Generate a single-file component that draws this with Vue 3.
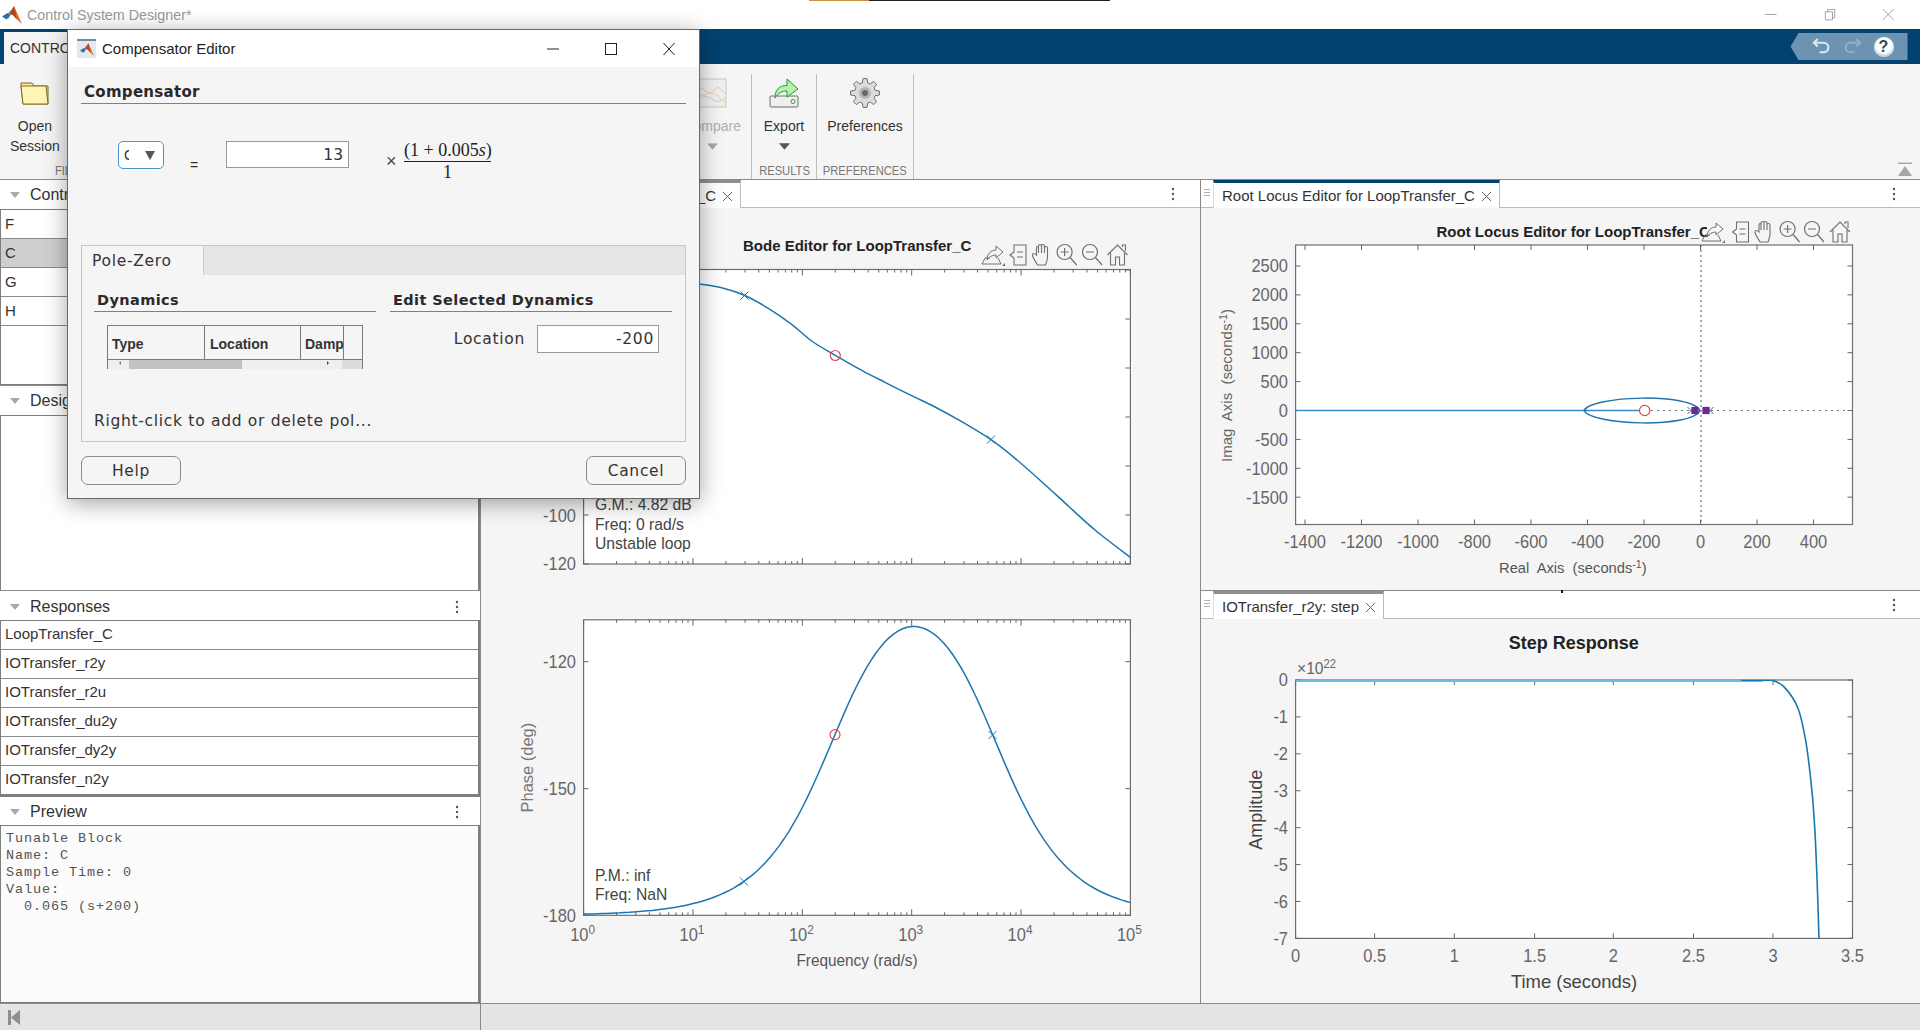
<script setup>
import { h } from 'vue'

const fmt = (n) => Math.round(n * 10) / 10
const T = (x, y, s, o = {}) => ({ x, y, s, size: 17.5, sx: 0.94, fill: '#666', anchor: 'middle', weight: 400, rot: 0, ...o })
const C = (a, b, c) => ({ d: a, stroke: b || '#1a76b0', w: c || 1.5 })
const crossPath = (x, y, r) => `M${x - r} ${y + r}L${x + r} ${y - r}M${x - r} ${y - r}L${x + r} ${y + r}`
const smooth = (pts) => {
  let d = `M${pts[0][0]} ${pts[0][1]}`
  for (let i = 0; i < pts.length - 1; i++) {
    const p0 = pts[i - 1] || pts[i], p1 = pts[i], p2 = pts[i + 1], p3 = pts[i + 2] || p2
    d += `C${fmt(p1[0] + (p2[0] - p0[0]) / 6)} ${fmt(p1[1] + (p2[1] - p0[1]) / 6)} ${fmt(p2[0] - (p3[0] - p1[0]) / 6)} ${fmt(p2[1] - (p3[1] - p1[1]) / 6)} ${fmt(p2[0])} ${fmt(p2[1])}`
  }
  return d
}
const range = (a, n, s) => Array.from({ length: n }, (_, i) => a + s * i)
const xTicks = (xs, t, b, l) => xs.map((x) => `M${x} ${t}v${l}M${x} ${b}v${-l}`).join('')
const yTicks = (ys, lft, r, l) => ys.map((y) => `M${lft} ${y}h${l}M${r} ${y}h${-l}`).join('')

/* ---------- Bode ---------- */
const L = 583.6, R = 1130.4, DEC = (R - L) / 5
const xw = (w) => L + DEC * Math.log10(w)
const decX = range(0, 6, 1).map((i) => L + DEC * i)
const minorX = []
range(0, 5, 1).forEach((d) => range(2, 8, 1).forEach((m) => minorX.push(fmt(L + DEC * (d + Math.log10(m))))))
const phaseAt = (w) => -180 + (Math.atan(w / 200) - Math.atan(w / 5460)) * 180 / Math.PI
const phaseY = (p) => 915.3 - (p + 180) / 30 * 126.8
const phasePts = range(0, 121, 1).map((i) => {
  const w = Math.pow(10, i / 24)
  return [fmt(xw(w)), fmt(phaseY(phaseAt(w)))]
})
const magRaw = [[12, 57], [80, 68], [148, 91], [220, 130], [290, 178], [350, 228], [421, 271], [500, 316], [570, 352], [650, 392], [720, 426], [800, 470], [888, 524], [960, 580], [1040, 650], [1120, 723], [1200, 795], [1306, 877]]
const magPts = magRaw.map(([a, b]) => [695 + a / 3, 265 + b / 3])
const magY = range(0, 7, 1).map((i) => 564 - 49 * i)
const bode = {
  vx: 480, vy: 208, w: 720, h: 795,
  axes: [[L, 269.5, R - L, 294.5], [L, 619.8, R - L, 295.5]],
  ticks:
    xTicks(decX, 269.5, 564, 6) + xTicks(minorX, 269.5, 564, 3) +
    xTicks(decX, 619.8, 915.3, 6) + xTicks(minorX, 619.8, 915.3, 3) +
    yTicks(magY, L, R, 5) + yTicks([661.7, 788.7, 915.3], L, R, 5),
  curves: [
    C(smooth(magPts)), C(`M${phasePts.map((p) => p.join(' ')).join('L')}`),
    C(crossPath(744.5, 295.5, 4), '#1a76b0', 1), C(crossPath(991, 439.5, 4), '#1a76b0', 1),
    C(crossPath(744, 881.6, 4), '#1a76b0', 1), C(crossPath(992.5, 735, 4), '#1a76b0', 1),
  ],
  circles: [[835.3, 355.5, 5], [835, 734.6, 5]],
  texts: [
    T(743, 251, 'Bode Editor for LoopTransfer_C', { size: 15, sx: 1, weight: 700, fill: '#222', anchor: 'start' }),
    T(576, 521.5, '-100', { anchor: 'end' }), T(576, 570, '-120', { anchor: 'end' }),
    T(576, 668, '-120', { anchor: 'end' }), T(576, 795, '-150', { anchor: 'end' }), T(576, 922, '-180', { anchor: 'end' }),
    T(595, 510, 'G.M.: 4.82 dB', { size: 16, sx: 0.98, fill: '#444', anchor: 'start' }),
    T(595, 529.5, 'Freq: 0 rad/s', { size: 16, sx: 0.98, fill: '#444', anchor: 'start' }),
    T(595, 549, 'Unstable loop', { size: 16, sx: 0.98, fill: '#444', anchor: 'start' }),
    T(595, 881, 'P.M.: inf', { size: 16, sx: 0.98, fill: '#444', anchor: 'start' }),
    T(595, 900, 'Freq: NaN', { size: 16, sx: 0.98, fill: '#444', anchor: 'start' }),
    T(533, 767.6, 'Phase (deg)', { size: 16, sx: 1.03, rot: -90, fill: '#777' }),
    T(857, 965.5, 'Frequency (rad/s)', { size: 16, sx: 0.96, fill: '#555' }),
    ...decX.map((x, i) => T(x - 1, 941, '10', { sup: String(i), supDy: -7 })),
  ],
  uses: [['edit', 993], ['list', 1018], ['hand', 1042.5], ['zin', 1066.6], ['zout', 1092], ['home', 1117.5]].map(([id, x]) => ({ id, x, y: 255 })),
  covers: [],
}

/* ---------- Root locus ---------- */
const AL = 1294.6, AR = 1851.5
const rlX = range(1304, 10, 56.5)
const rlY = range(266, 9, 28.9)
const rl = {
  vx: 1200, vy: 208, w: 720, h: 382,
  axes: [[AL, 245, AR - AL, 279.5]],
  ticks: xTicks(rlX, 245, 524.5, 5) + yTicks(rlY, AL, AR, 5),
  curves: [
    { d: 'M1700 245V524.5', stroke: '#555', w: 1, dash: '2 3' },
    { d: 'M1650 410.5H1851.5', stroke: '#777', w: 1, dash: '2 4' },
    C('M1294.6 410.5H1638', '#3b8cc4', 1.5),
    C('M1583 410.5C1590 396 1690 392 1699 410.5C1690 429 1590 425 1583 410.5Z', '#1f74ad', 1.5),
    C(crossPath(1690, 410.5, 3.5), '#2b6fb0', 1), C(crossPath(1709, 410.5, 3.5), '#2b6fb0', 1),
  ],
  circles: [[1643.7, 410.5, 5.2]],
  squares: [[1694, 410.5], [1705, 410.5]],
  texts: [
    T(1435.5, 237, 'Root Locus Editor for LoopTransfer_C', { size: 15, sx: 1, weight: 700, fill: '#222', anchor: 'start' }),
    ...['2500', '2000', '1500', '1000', '500', '0', '-500', '-1000', '-1500'].map((s, i) => T(1287, rlY[i] + 6.3, s, { anchor: 'end' })),
    ...['-1400', '-1200', '-1000', '-800', '-600', '-400', '-200', '0', '200', '400'].map((s, i) => T(rlX[i], 547.5, s)),
    T(1498, 573, 'Real\u00a0 Axis\u00a0 (seconds', { size: 15.5, sx: 0.95, fill: '#555', anchor: 'start', sup: '-1', supDy: -5, tail: ')' }),
    T(1231, 462, 'Imag\u00a0 Axis\u00a0 (seconds', { size: 15, sx: 1, fill: '#666', anchor: 'start', rot: -90, sup: '-1', supDy: -5, tail: ')' }),
  ],
  uses: [['edit', 1712], ['list', 1739.5], ['hand', 1764], ['zin', 1788.6], ['zout', 1813], ['home', 1839]].map(([id, x]) => ({ id, x, y: 232 })),
  covers: [[1706, 222, 24, 20]],
}

/* ---------- Step ---------- */
const stX = [1294.6, 1373.6, 1453.3, 1533.6, 1612.3, 1692.5, 1772, 1851.5]
const stY = range(680, 8, 36.91)
const stepZoom = [[1245, 571], [1270, 590], [1300, 650], [1318, 750], [1330, 880], [1337, 1000], [1342, 1150], [1346, 1307]]
const stepPts = stepZoom.map(([a, b]) => [fmt(1200 + a / 2.178), fmt(480 + b / 2.851)])
const step = {
  vx: 1200, vy: 619, w: 720, h: 384,
  axes: [[AL, 680, AR - AL, 258.4]],
  ticks: xTicks(stX, 680, 938.4, 5) + yTicks(stY, AL, AR, 5),
  curves: [C(`M${AL} 681H1762`, '#72b8e4', 2), C(`M1740 680.4H1771.6`, '#1a76b0', 1.2), C(smooth(stepPts), '#1a76b0', 1.6)],
  circles: [],
  texts: [
    T(1572.8, 648.5, 'Step Response', { size: 18, sx: 1, weight: 700, fill: '#222' }),
    T(1296, 674, '×10', { size: 16.5, sx: 0.95, anchor: 'start', sup: '22', supDy: -6 }),
    ...['0', '-1', '-2', '-3', '-4', '-5', '-6', '-7'].map((s, i) => T(1287, stY[i] + 6.3, s, { anchor: 'end' })),
    ...['0', '0.5', '1', '1.5', '2', '2.5', '3', '3.5'].map((s, i) => T(stX[i], 961.5, s)),
    T(1573, 988, 'Time (seconds)', { size: 19, sx: 0.97, fill: '#444' }),
    T(1261, 809.7, 'Amplitude', { size: 18, sx: 1, rot: -90, fill: '#444' }),
  ],
  uses: [],
  covers: [],
}

const Plot = ({ data: p }) =>
  h('svg', { class: 'plot', width: p.w, height: p.h, viewBox: `${p.vx} ${p.vy} ${p.w} ${p.h}` }, [
    ...p.axes.map((a) => h('rect', { x: a[0], y: a[1], width: a[2], height: a[3], fill: '#fff', stroke: '#6e6e6e', 'stroke-width': 1.2 })),
    h('path', { d: p.ticks, stroke: '#666', fill: 'none', 'stroke-width': 1 }),
    ...p.curves.map((c) => h('path', { d: c.d, stroke: c.stroke, 'stroke-width': c.w, 'stroke-dasharray': c.dash, fill: 'none' })),
    ...(p.squares || []).map((s) => h('rect', { x: s[0] - 3.6, y: s[1] - 3.6, width: 7.2, height: 7.2, fill: '#6a2a8e' })),
    ...p.circles.map((c) => h('circle', { cx: c[0], cy: c[1], r: c[2], fill: 'none', stroke: '#e5484d', 'stroke-width': 1.2 })),
    ...p.texts.map((t) =>
      h('text', {
        transform: `translate(${t.x} ${t.y}) rotate(${t.rot}) scale(${t.sx} 1)`,
        'font-size': t.size, 'font-weight': t.weight, fill: t.fill, 'text-anchor': t.anchor,
      }, [
        t.s,
        t.sup ? h('tspan', { dy: t.supDy, 'font-size': t.size * 0.72 }, t.sup) : null,
        t.tail ? h('tspan', { dy: -t.supDy }, t.tail) : null,
      ])),
    ...p.covers.map((c) => h('rect', { x: c[0], y: c[1], width: c[2], height: c[3], fill: '#f5f5f5' })),
    ...p.uses.map((u) => h('use', { href: `#ti-${u.id}`, x: u.x - 12, y: u.y - 12, width: 24, height: 24 })),
  ])

const gearPath = (() => {
  const n = 8, pts = []
  for (let i = 0; i < n; i++) {
    const a = (i / n) * Math.PI * 2
    ;[[-0.26, 10.5], [-0.14, 14.5], [0.14, 14.5], [0.26, 10.5]].forEach(([o, r]) => {
      pts.push(`${fmt(15 + r * Math.cos(a + o))} ${fmt(15 + r * Math.sin(a + o))}`)
    })
  }
  return `M${pts.join('L')}Z`
})()

const controlRows = ['F', 'C', 'G', 'H']
const responseRows = ['LoopTransfer_C', 'IOTransfer_r2y', 'IOTransfer_r2u', 'IOTransfer_du2y', 'IOTransfer_dy2y', 'IOTransfer_n2y']
const previewText = `Tunable Block
Name: C
Sample Time: 0
Value:
  0.065 (s+200)`
</script>

<template>
  <div class="app">
    <svg class="defs" width="0" height="0" aria-hidden="true">
      <defs>
        <symbol id="logo" viewBox="0 0 20 18">
          <polygon points="0,10.5 5.5,7 8.5,9 4.5,13.5" fill="#2d6fa8" />
          <polygon points="4.5,13.5 8.5,9 6,7.5 11,1.5 7,12 " fill="#3c8fc7" />
          <polygon points="12,0 20,18 15,13.5 11,9 7.5,8.5" fill="#e0702a" />
          <polygon points="12,0 14,9 15,13.5 11,9 8,8" fill="#b8401c" />
        </symbol>
        <symbol id="kebab" viewBox="0 0 4 14">
          <circle cx="2" cy="2" r="1.2" fill="#555" />
          <circle cx="2" cy="7" r="1.2" fill="#555" />
          <circle cx="2" cy="12" r="1.2" fill="#555" />
        </symbol>
        <symbol id="tri" viewBox="0 0 12 7">
          <polygon points="0,0 12,0 6,7" fill="#a8a8a8" />
        </symbol>
        <symbol id="ti-edit" viewBox="-12 -12 24 24">
          <g fill="none" stroke="#707070" stroke-width="1">
            <path d="M-11 9L-8 3H-3M-11 9H8L5 3" />
            <path d="M-6 5C-6 -1 -2 -5 3 -5V-9L10 -3L3 3V0C-1 0 -4 2 -6 5Z" />
          </g>
          <path d="M9 11H12V8Z" fill="#707070" />
        </symbol>
        <symbol id="ti-list" viewBox="-12 -12 24 24">
          <path d="M-4 -10H8V10H-4V3L-8 0L-4 -3ZM-1 -3H5M-1 2H5" fill="none" stroke="#707070" stroke-width="1.1" />
        </symbol>
        <symbol id="ti-hand" viewBox="-12 -12 24 24">
          <path d="M-5 10C-7 6 -10 3 -10 0C-10 -2 -8 -2 -6 0L-6 -7C-6 -9 -4 -9 -4 -7L-4 -2L-4 -9C-4 -11 -1 -11 -1 -9L-1 -2L-1 -9C-1 -11 2 -11 2 -9L2 -2L2 -7C2 -9 5 -9 5 -7L5 2C5 5 4 7 3 10Z" fill="none" stroke="#707070" stroke-width="1.1" />
        </symbol>
        <symbol id="ti-zin" viewBox="-12 -12 24 24">
          <g fill="none" stroke="#707070" stroke-width="1.2">
            <circle cx="-2" cy="-3" r="7.5" />
            <path d="M3.5 2.5L10 10M-6 -3H2M-2 -7V1" />
          </g>
        </symbol>
        <symbol id="ti-zout" viewBox="-12 -12 24 24">
          <g fill="none" stroke="#707070" stroke-width="1.2">
            <circle cx="-2" cy="-3" r="7.5" />
            <path d="M3.5 2.5L10 10M-6 -3H2" />
          </g>
        </symbol>
        <symbol id="ti-home" viewBox="-12 -12 24 24">
          <path d="M-10 0L0 -10L10 0M-7 -2V10H-2V2H2V10H7V-2M5 -8V-10H8V-4" fill="none" stroke="#707070" stroke-width="1.1" />
        </symbol>
      </defs>
    </svg>

    <header class="titlebar">
      <svg class="app-logo"><use href="#logo" /></svg>
      <span class="app-title">Control System Designer*</span>
      <div class="top-line"><i class="top-orange"></i><i class="top-black"></i></div>
      <div class="win-controls">
        <svg class="win-btn" viewBox="0 0 14 14"><path d="M0 7H13" stroke="#999" fill="none" /></svg>
        <svg class="win-btn" viewBox="0 0 14 14"><path d="M1.5 4H9.5V13H1.5ZM4 4V1.5H12V10.5H9.5" stroke="#999" fill="none" /></svg>
        <svg class="win-btn" viewBox="0 0 14 14"><path d="M1 1L13 13M13 1L1 13" stroke="#999" fill="none" /></svg>
      </div>
    </header>

    <div class="bluebar">
      <div class="main-tab">CONTROL SYSTEM</div>
      <div class="quick">
        <svg class="q-icon" viewBox="0 0 20 20"><path d="M6 2L2 6L6 10M2 6H12C19 6 19 16 12 16H8" stroke="#dbe8f2" stroke-width="2.2" fill="none" /></svg>
        <svg class="q-icon" viewBox="0 0 20 20"><path d="M14 2L18 6L14 10M18 6H8C1 6 1 16 8 16H12" stroke="#8fb0c9" stroke-width="2.2" fill="none" /></svg>
        <span class="q-help">?</span>
      </div>
    </div>

    <div class="toolstrip">
      <section class="tsec sec-file">
        <div class="tool">
          <svg class="ticon" viewBox="0 0 32 30">
            <path d="M2 8V5H13L15 8H29V26H4Z" fill="#f5e9a0" stroke="#7d6c20" />
            <path d="M2 8H27L29 26H4Z" fill="#fdf4b8" stroke="#7d6c20" />
          </svg>
          <span class="tlabel">Open</span>
          <span class="tlabel">Session</span>
        </div>
        <span class="sec-label label-file">FILE</span>
      </section>
      <section class="tsec sec-mid">
        <div class="tool tool-off">
          <svg class="ticon" viewBox="0 0 32 30">
            <rect x="2" y="1" width="28" height="28" fill="#f0f0f0" stroke="#c8c8c8" />
            <path d="M2 8L14 16L22 9L30 16" stroke="#efc4b4" fill="none" />
            <path d="M2 16L14 20L22 24L30 20" stroke="#b9d3e6" fill="none" />
            <path d="M2 20L14 14L22 18L30 26" stroke="#e9dca0" fill="none" />
          </svg>
          <span class="tlabel">Compare</span>
          <svg class="tarrow" viewBox="0 0 12 7"><use href="#tri" /></svg>
        </div>
        <span class="sec-label">&nbsp;</span>
      </section>
      <section class="tsec sec-res">
        <div class="tool">
          <svg class="ticon" viewBox="0 0 32 30">
            <rect x="2" y="18" width="28" height="11" rx="1" fill="#efefef" stroke="#707070" />
            <circle cx="25" cy="23.5" r="2" fill="#fff" stroke="#1c9a35" />
            <path d="M7 20C7 12 11 7.5 19 7.5V1L30 11L19 19V13C14 13 10 15 7 20Z" fill="#b8f0ac" stroke="#169a2f" />
          </svg>
          <span class="tlabel">Export</span>
          <svg class="tarrow dark" viewBox="0 0 12 7"><polygon points="0,0 12,0 6,7" fill="#555" /></svg>
        </div>
        <span class="sec-label">RESULTS</span>
      </section>
      <section class="tsec sec-pref">
        <div class="tool">
          <svg class="ticon" viewBox="0 0 30 30">
            <path :d="gearPath" fill="#dcdcdc" stroke="#6f6f6f" />
            <circle cx="15" cy="15" r="6" fill="#b4b4b4" />
            <circle cx="15" cy="15" r="3" fill="#666" />
          </svg>
          <span class="tlabel">Preferences</span>
        </div>
        <span class="sec-label">PREFERENCES</span>
      </section>
      <svg class="collapse" viewBox="0 0 14 14">
        <path d="M0 .5H14V2H0Z" fill="#a6a6a6" />
        <polygon points="7,4 14,14 0,14" fill="#a6a6a6" />
      </svg>
    </div>

    <main class="main">
      <aside class="left">
        <div class="phead">
          <svg class="ptri"><use href="#tri" /></svg><span>Controllers and Fixed Blocks</span>
          <svg class="kebab"><use href="#kebab" /></svg>
        </div>
        <ul class="rows rows-control">
          <li v-for="r in controlRows" :key="r" class="row" :class="{ sel: r === 'C' }">{{ r }}</li>
        </ul>
        <div class="phead">
          <svg class="ptri"><use href="#tri" /></svg><span>Design History</span>
          <svg class="kebab"><use href="#kebab" /></svg>
        </div>
        <div class="design-box"></div>
        <div class="phead head-resp">
          <svg class="ptri"><use href="#tri" /></svg><span>Responses</span>
          <svg class="kebab"><use href="#kebab" /></svg>
        </div>
        <ul class="rows rows-resp">
          <li v-for="r in responseRows" :key="r" class="row">{{ r }}</li>
        </ul>
        <div class="phead head-prev">
          <svg class="ptri"><use href="#tri" /></svg><span>Preview</span>
          <svg class="kebab"><use href="#kebab" /></svg>
        </div>
        <pre class="preview">{{ previewText }}</pre>
      </aside>

      <section class="center">
        <div class="strip">
          <div class="doc-tab doc-tab-center">
            <span class="doc-text">Bode Editor for LoopTransfer_C</span>
            <svg class="x-ico" viewBox="0 0 12 12"><path d="M1 1L11 11M11 1L1 11" stroke="#555" fill="none" /></svg>
          </div>
          <svg class="kebab kebab-c"><use href="#kebab" /></svg>
        </div>
        <Plot :data="bode" />
      </section>

      <section class="right">
        <div class="strip">
          <span class="grip"></span>
          <div class="doc-tab doc-active">
            <span class="doc-text">Root Locus Editor for LoopTransfer_C</span>
            <svg class="x-ico" viewBox="0 0 12 12"><path d="M1 1L11 11M11 1L1 11" stroke="#555" fill="none" /></svg>
          </div>
          <svg class="kebab kebab-r"><use href="#kebab" /></svg>
        </div>
        <Plot :data="rl" />
        <div class="strip strip-2">
          <span class="grip"></span>
          <div class="doc-tab">
            <span class="doc-text">IOTransfer_r2y: step</span>
            <svg class="x-ico" viewBox="0 0 12 12"><path d="M1 1L11 11M11 1L1 11" stroke="#555" fill="none" /></svg>
          </div>
          <svg class="kebab kebab-r"><use href="#kebab" /></svg>
          <i class="split-mark"></i>
        </div>
        <Plot :data="step" />
      </section>
    </main>

    <footer class="status">
      <div class="status-left">
        <svg class="status-ico" viewBox="0 0 12 15">
          <rect x="0" y="0" width="3" height="15" fill="#8e8e8e" />
          <polygon points="12,0 12,15 3,7.5" fill="#8e8e8e" />
        </svg>
      </div>
    </footer>

    <div class="dialog">
      <div class="dlg-title">
        <span class="dlg-icon"><svg class="dlg-logo"><use href="#logo" /></svg></span>
        <span class="dlg-name">Compensator Editor</span>
        <div class="dlg-controls">
          <svg class="dlg-btn" viewBox="0 0 14 14"><path d="M1 7H13" stroke="#222" fill="none" /></svg>
          <svg class="dlg-btn" viewBox="0 0 14 14"><rect x="1.5" y="1.5" width="11" height="11" stroke="#222" fill="none" /></svg>
          <svg class="dlg-btn" viewBox="0 0 14 14"><path d="M1.5 1L12.5 13M12.5 1L1.5 13" stroke="#222" fill="none" /></svg>
        </div>
      </div>
      <div class="dlg-body">
        <div class="section-head head-comp">Compensator</div>
        <div class="formula">
          <div class="combo"><span class="combo-text">C</span><i class="combo-arrow"></i></div>
          <span class="eq">=</span>
          <div class="field field-gain">13</div>
          <span class="times">×</span>
          <div class="frac">
            <span class="num">(1 + 0.005<em>s</em>)</span>
            <span class="den">1</span>
          </div>
        </div>
        <div class="panel">
          <div class="tabhead"><div class="tabhead-tab">Pole-Zero</div></div>
          <div class="panel-body">
            <div class="cols">
              <div class="col">
                <div class="section-head head-sub">Dynamics</div>
                <div class="table">
                  <div class="thead">
                    <span class="th th-1">Type</span>
                    <span class="th th-2">Location</span>
                    <span class="th th-3">Damp</span>
                    <span class="th th-4"></span>
                  </div>
                  <div class="tscroll">
                    <i class="t-arrow t-arrow-l"></i>
                    <i class="t-thumb"></i>
                    <i class="t-arrow t-arrow-r"></i>
                    <i class="t-corner"></i>
                  </div>
                </div>
              </div>
              <div class="col">
                <div class="section-head head-sub">Edit Selected Dynamics</div>
                <div class="loc-row">
                  <span class="loc-label">Location</span>
                  <div class="field field-loc">-200</div>
                </div>
              </div>
            </div>
            <div class="note">Right-click to add or delete pol...</div>
          </div>
        </div>
        <div class="btn-row">
          <button class="btn">Help</button>
          <button class="btn">Cancel</button>
        </div>
      </div>
    </div>
  </div>
</template>

<style>
html, body { margin: 0; padding: 0; background: #f5f5f5; overflow: hidden; }
</style>

<style scoped>
.app {
  position: relative;
  width: 1920px;
  height: 1030px;
  overflow: hidden;
  background: #f5f5f5;
  font-family: "Liberation Sans", Arial, sans-serif;
  color: #333;
  display: flex;
  flex-direction: column;
}
.defs { position: absolute; }

.titlebar {
  position: relative;
  height: 29px;
  flex: none;
  background: #fff;
  display: flex;
  align-items: center;
  padding-left: 2px;
}
.app-logo { width: 20px; height: 18px; }
.app-title { margin-left: 5px; font-size: 14.3px; color: #999; }
.top-line { position: absolute; left: 809px; top: 0; display: flex; height: 1px; }
.top-orange { width: 60px; background: #c8963f; }
.top-black { width: 241px; background: #222; }
.win-controls { margin-left: auto; display: flex; padding-right: 2.5px; }
.win-btn { width: 12.5px; height: 13px; margin: 0 23px; }

.bluebar {
  height: 35px;
  flex: none;
  background: #03426f;
  display: flex;
  align-items: flex-end;
  padding-left: 4px;
}
.main-tab {
  width: 140px;
  height: 32px;
  background: #f5f5f5;
  font-size: 14px;
  line-height: 32px;
  padding-left: 6px;
  box-sizing: border-box;
  white-space: nowrap;
  overflow: hidden;
}
.quick {
  margin-left: auto;
  margin-right: 12.5px;
  align-self: flex-start;
  margin-top: 4px;
  width: 117px;
  height: 27px;
  background: #6c93b2;
  clip-path: polygon(0 50%, 8px 0, 100% 0, 100% 100%, 8px 100%);
  display: flex;
  align-items: center;
  padding-left: 21px;
  box-sizing: border-box;
  gap: 12px;
}
.q-icon { width: 19px; height: 19px; }
.q-help {
  width: 20px;
  height: 20px;
  border-radius: 50%;
  background: #fff;
  color: #2d4a63;
  font-weight: 700;
  font-size: 16px;
  line-height: 20px;
  text-align: center;
  box-shadow: inset 0 -2px 3px #b8c6d2;
}

.toolstrip {
  height: 115px;
  flex: none;
  box-sizing: border-box;
  padding-top: 10px;
  display: flex;
  background: #f5f5f5;
}
.tsec {
  height: 105px;
  box-sizing: border-box;
  border-right: 1px solid #bdbdbd;
  display: flex;
  flex-direction: column;
  align-items: center;
  justify-content: space-between;
}
.sec-file { width: 138px; border-right: 0; align-items: flex-start; padding-left: 10px; }
.label-file { margin-left: 43px; }
.sec-mid { width: 614px; align-items: flex-end; padding-right: 10px; }
.sec-res { width: 65px; }
.sec-pref { width: 97px; }
.tool { display: flex; flex-direction: column; align-items: center; padding-top: 4px; }
.tool-off { color: #b0b0b0; }
.ticon { width: 32px; height: 30px; flex: none; margin-bottom: 8px; }
.tlabel { font-size: 14px; line-height: 20px; white-space: nowrap; }
.tarrow { width: 11px; height: 7px; margin-top: 7px; }
.sec-label {
  font-size: 13px;
  line-height: 17px;
  color: #777;
  transform: scaleX(0.86);
  white-space: nowrap;
}
.collapse { width: 14px; height: 14px; margin-left: auto; margin-right: 8px; align-self: flex-end; margin-bottom: 3px; }

.main { flex: 1; display: flex; min-height: 0; }
.left {
  width: 481px;
  flex: none;
  box-sizing: border-box;
  border-right: 1px solid #8a8a8a;
  background: #fff;
  display: flex;
  flex-direction: column;
}
.phead {
  height: 30px;
  flex: none;
  box-sizing: border-box;
  border-top: 1px solid #8a8a8a;
  display: flex;
  align-items: center;
  font-size: 16px;
  color: #333;
  background: #fff;
  padding-left: 10px;
}
.head-resp, .head-prev { padding-top: 2px; }
.ptri { width: 10px; height: 6px; margin-right: 10px; }
.kebab { width: 4px; height: 14px; }
.phead .kebab { margin-left: auto; margin-right: 21px; }
.rows { list-style: none; margin: 0; padding: 0; border: 1px solid #7e7e7e; border-width: 1px 2px 0 1px; }
.rows-control { height: 176px; flex: none; box-sizing: border-box; border-bottom: 1px solid #7e7e7e; }
.rows-resp { height: 177px; flex: none; box-sizing: border-box; border-bottom: 3px solid #7e7e7e; }
.row {
  height: 29px;
  box-sizing: border-box;
  border-bottom: 1px solid #8a8a8a;
  font-size: 15px;
  line-height: 25px;
  padding-left: 4px;
  color: #333;
}
.rows-control .row { line-height: 27px; }
.rows-resp .row:last-child { border-bottom: 0; }
.sel { background: #cfcfcf; }
.design-box {
  height: 175px;
  flex: none;
  box-sizing: border-box;
  border: 1px solid #7e7e7e;
  border-width: 1px 2px 0 1px;
}
.head-prev { height: 28px; border-top: 0; }
.preview {
  margin: 0;
  flex: 1;
  box-sizing: border-box;
  background: #fbfbfb;
  border: 1px solid #7e7e7e;
  border-width: 1px 2px 1px 1px;
  padding: 4px 5px;
  font-family: "Liberation Mono", monospace;
  font-size: 13.5px;
  letter-spacing: 0.9px;
  line-height: 17px;
  color: #555;
}

.center, .right { width: 720px; flex: none; background: #f5f5f5; }
.center { width: 719px; border-right: 1px solid #8a8a8a; }
.right { width: 720px; }
.plot { display: block; font-family: "Liberation Sans", Arial, sans-serif; }
.center :deep(.plot) { margin-left: -1px; }
.strip {
  position: relative;
  height: 29px;
  box-sizing: border-box;
  background: #fff;
  border-top: 1px solid #8a8a8a;
  border-bottom: 1px solid #bbb;
  display: flex;
  align-items: center;
}
.strip-2 { margin-top: 0; border-top: 1px solid #8a8a8a; }
.grip {
  width: 12px;
  height: 9px;
  flex: none;
  margin-top: -1px;
  background: repeating-linear-gradient(#b0b0b0 0 1px, transparent 1px 3px) no-repeat 3px 0 / 6px 100%;
}
.doc-tab {
  height: 28px;
  margin-bottom: -1px;
  box-sizing: border-box;
  background: #fff;
  border-top: 3px solid #8f8f8f;
  border-left: 1px solid #ddd;
  border-right: 1px solid #bbb;
  display: flex;
  align-items: center;
  padding: 1px 7px 0 8px;
  font-size: 15px;
  white-space: nowrap;
  color: #333;
}
.doc-tab-center { width: 260px; justify-content: flex-end; }
.doc-active { border-top-color: #03426f; }
.doc-text { line-height: 20px; }
.x-ico { width: 11px; height: 11px; margin-left: 6px; flex: none; }
.kebab-c { margin-left: auto; margin-right: 25px; }
.kebab-r { margin-left: auto; margin-right: 25px; }
.split-mark { position: absolute; left: 360px; top: -1px; width: 2px; height: 3px; background: #111; }

.status {
  height: 27px;
  flex: none;
  box-sizing: border-box;
  background: #e4e4e4;
  border-top: 1px solid #8a8a8a;
  display: flex;
}
.status-left { width: 481px; box-sizing: border-box; border-right: 1px solid #8a8a8a; padding: 6px 0 0 8px; }
.status-ico { display: block; width: 12px; height: 15px; }

.dialog {
  position: absolute;
  left: 68px;
  top: 30px;
  width: 631px;
  height: 468px;
  box-sizing: border-box;
  background: #f5f5f5;
  box-shadow: 0 0 0 1px #6a6a6a, 0 4px 22px rgba(0, 0, 0, 0.4);
  font-family: "DejaVu Sans", sans-serif;
  color: #333;
  z-index: 5;
}
.dlg-title {
  height: 37px;
  background: #fff;
  display: flex;
  align-items: center;
  padding-left: 9px;
  font-family: "Liberation Sans", Arial, sans-serif;
}
.dlg-icon {
  width: 19px;
  height: 19px;
  background: #e4e8ec;
  border-top: 2px solid #6a8aa6;
  box-sizing: border-box;
  display: flex;
  align-items: center;
  justify-content: center;
}
.dlg-logo { width: 14px; height: 13px; }
.dlg-name { margin-left: 6px; font-size: 15px; color: #222; }
.dlg-controls { margin-left: auto; display: flex; margin-right: 1px; }
.dlg-btn { width: 14px; height: 14px; margin: 0 22px; }
.dlg-body { padding: 0 13px; }
.section-head {
  height: 24px;
  line-height: 24px;
  box-sizing: border-box;
  border-bottom: 1px solid #808080;
  font-size: 14.5px;
  font-weight: 700;
  letter-spacing: 0.4px;
  padding-left: 3px;
  color: #2a2a2a;
  white-space: nowrap;
}
.head-comp { margin-top: 13px; font-size: 15px; letter-spacing: 0.3px; }
.head-sub { height: 23px; line-height: 22px; }
.formula { display: flex; align-items: flex-start; margin-top: 37px; padding-left: 37px; height: 28px; }
.combo {
  width: 46px;
  height: 28px;
  box-sizing: border-box;
  border: 1px solid #4f93c4;
  border-radius: 5px;
  background: #fff;
  display: flex;
  align-items: center;
  padding-left: 5px;
}
.combo-text { width: 5px; overflow: hidden; font-size: 14px; font-family: "Liberation Sans", sans-serif; }
.combo-arrow {
  margin-left: 16px;
  width: 0;
  height: 0;
  border: 5px solid transparent;
  border-top: 9px solid #555;
  border-bottom: 0;
}
.eq { margin-left: 26px; margin-top: 16px; font-size: 14px; width: 10px; font-family: "Liberation Sans", sans-serif; }
.field {
  box-sizing: border-box;
  background: #fff;
  border: 1px solid #9a9a9a;
  text-align: right;
  padding-right: 5px;
  font-size: 15.5px;
}
.field-gain { margin-left: 26px; width: 123px; height: 27px; line-height: 27px; }
.times { margin-left: 37px; margin-top: 10px; font-size: 18px; width: 14px; font-family: "Liberation Sans", sans-serif; color: #444; }
.frac {
  margin-left: 4px;
  display: flex;
  flex-direction: column;
  align-items: center;
  width: 87px;
  font-family: "Liberation Serif", serif;
  font-size: 18px;
  color: #222;
  white-space: nowrap;
}
.num { border-bottom: 1px solid #222; width: 100%; text-align: center; line-height: 21px; margin-top: -1px; }
.den { line-height: 21px; }
.panel {
  margin-top: 76px;
  width: 605px;
  height: 197px;
  box-sizing: border-box;
  border: 1px solid #c6c6c6;
}
.tabhead { height: 29px; background: #e5e5e5; display: flex; }
.tabhead-tab {
  width: 122px;
  box-sizing: border-box;
  background: #f5f5f5;
  border-right: 1px solid #cfcfcf;
  padding-left: 10px;
  font-size: 15.5px;
  letter-spacing: 0.7px;
  line-height: 31px;
  color: #333;
}
.panel-body { padding: 0 12px; }
.cols { display: flex; gap: 14px; height: 94px; }
.col { width: 282px; padding-top: 14px; box-sizing: border-box; }
.table {
  margin: 13px 0 0 13px;
  width: 256px;
  height: 44px;
  box-sizing: border-box;
  border: 1px solid #7a7a7a;
  font-family: "Liberation Sans", sans-serif;
}
.thead { display: flex; height: 33px; border-bottom: 1px solid #7a7a7a; }
.th {
  box-sizing: border-box;
  border-right: 1px solid #7a7a7a;
  font-size: 14px;
  font-weight: 700;
  line-height: 36px;
  overflow: hidden;
  color: #333;
  white-space: nowrap;
}
.th-1 { width: 97px; padding-left: 4px; }
.th-2 { width: 96px; padding-left: 5px; }
.th-3 { width: 43px; padding-left: 4px; }
.th-4 { flex: 1; border-right: 0; }
.tscroll { position: relative; height: 9px; background: #efefef; }
.t-thumb { position: absolute; left: 21px; top: 0; width: 113px; height: 100%; background: #c2c2c2; }
.t-corner { position: absolute; right: 0; top: 0; width: 20px; height: 100%; background: #dcdcdc; }
.t-arrow { position: absolute; top: 1px; width: 0; height: 0; border: 2px solid transparent; }
.t-arrow-l { left: 9px; border-right-color: #777; }
.t-arrow-r { left: 219px; border-left-color: #444; }
.loc-row { display: flex; align-items: center; justify-content: flex-end; margin: 13px 13px 0 0; }
.loc-label { font-size: 15.5px; letter-spacing: 0.7px; margin-right: 12px; }
.field-loc { width: 122px; height: 28px; line-height: 26px; padding-right: 4px; letter-spacing: 0.7px; }
.note { margin-top: 43px; font-size: 15.5px; letter-spacing: 0.7px; line-height: 18px; white-space: nowrap; }
.btn-row { margin-top: 14px; width: 605px; display: flex; justify-content: space-between; }
.btn {
  width: 100px;
  height: 29px;
  border: 1px solid #8a8a8a;
  border-radius: 7px;
  background: #f5f5f5;
  font-family: "DejaVu Sans", sans-serif;
  font-size: 15.5px;
  letter-spacing: 0.7px;
  color: #333;
  padding: 0;
}
</style>
